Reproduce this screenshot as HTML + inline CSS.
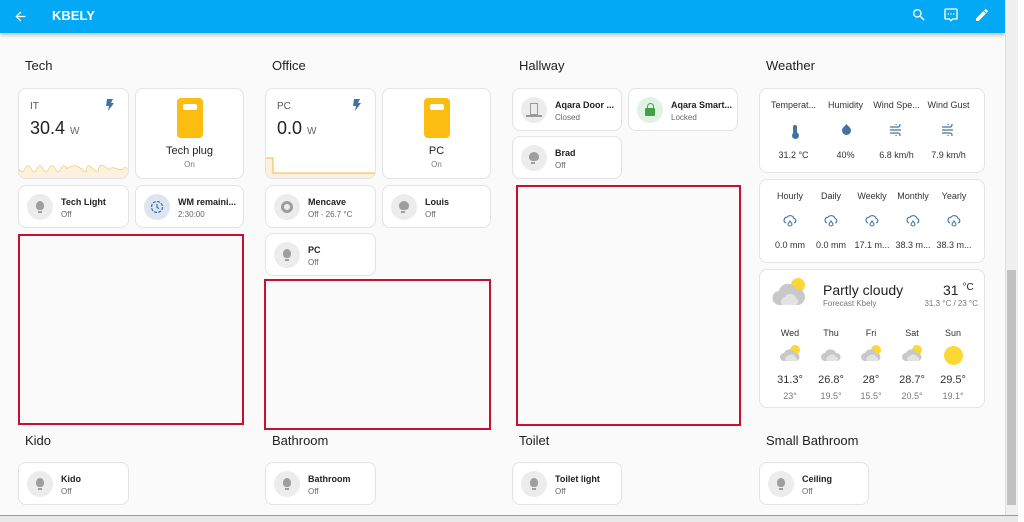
<!DOCTYPE html>
<html><head><meta charset="utf-8"><style>
*{box-sizing:border-box;margin:0;padding:0}
body{width:1024px;height:522px;overflow:hidden;background:#fff;font-family:"Liberation Sans",sans-serif;position:relative;color:#212121}
.main{position:absolute;left:0;top:0;width:1005px;height:516px;background:#fafafa}
.hdr{position:absolute;left:0;top:0;width:1005px;height:33px;background:#03a9f4;box-shadow:0 2px 4px rgba(0,0,0,.25);color:#fff}
.a{position:absolute}
.t{position:absolute;font-size:13px;color:#212121}
.c{position:absolute;background:#fff;border:1px solid #e3e3e3;border-radius:8px}
.red{position:absolute;border:2px solid #c8102e}
.tile .ic{position:absolute;left:8px;top:8px;width:26px;height:26px;border-radius:50%;background:#ececec}
.tile .n{position:absolute;left:42px;top:11px;font-size:9px;font-weight:bold;color:#222;white-space:nowrap}
.tile .s{position:absolute;left:42px;top:24px;font-size:8px;color:#666;white-space:nowrap}
.bulb{position:absolute;left:9px;top:7px;width:8px;height:9px;border-radius:50% 50% 40% 40%;background:#9e9e9e}
.bulb:after{content:"";position:absolute;left:2px;top:10px;width:4px;height:2px;background:#9e9e9e}
.wc{font-size:9px;color:#333;text-align:center;position:absolute}
</style></head><body>
<div class="main"></div>
<div class="hdr">
<svg class="a" style="left:13px;top:9px" width="15" height="15" viewBox="0 0 24 24"><path d="M20 11H7.8l5.6-5.6L12 4l-8 8 8 8 1.4-1.4L7.8 13H20z" fill="#fff"/></svg>
<div class="a" style="left:52px;top:8px;font-size:13px;font-weight:bold;color:#fff">KBELY</div>
<svg class="a" style="left:911px;top:7px" width="16" height="16" viewBox="0 0 24 24"><path d="M15.5 14h-.8l-.3-.3A6.5 6.5 0 1 0 9.5 16a6.5 6.5 0 0 0 4.2-1.6l.3.3v.8l5 5 1.5-1.5zm-6 0a4.5 4.5 0 1 1 0-9 4.5 4.5 0 0 1 0 9z" fill="#fff"/></svg>
<svg class="a" style="left:943px;top:7px" width="16" height="16" viewBox="0 0 24 24"><path d="M20 2H4a2 2 0 0 0-2 2v13a2 2 0 0 0 2 2h5l3 3 3-3h5a2 2 0 0 0 2-2V4a2 2 0 0 0-2-2zm0 15h-5.8L12 19.2 9.8 17H4V4h16zM7 9.5h2v2H7zm4 0h2v2h-2zm4 0h2v2h-2z" fill="#fff"/></svg>
<svg class="a" style="left:974px;top:7px" width="16" height="16" viewBox="0 0 24 24"><path d="M3 17.25V21h3.75L17.8 9.94l-3.75-3.75zM20.7 7.04a1 1 0 0 0 0-1.41l-2.34-2.34a1 1 0 0 0-1.41 0l-1.83 1.83 3.75 3.75z" fill="#fff"/></svg>
</div>
<!-- scrollbar -->
<div class="a" style="left:1005px;top:0;width:13px;height:516px;background:#f0f0f0;border-left:1px solid #ddd"></div>
<div class="a" style="left:1007px;top:270px;width:9px;height:235px;background:#c1c1c1"></div>
<div class="a" style="left:0;top:515px;width:1018px;height:7px;background:#e8e8e8;border-top:1px solid #999"></div>

<div class="t" style="left:25px;top:58px">Tech</div>
<div class="t" style="left:272px;top:58px">Office</div>
<div class="t" style="left:519px;top:58px">Hallway</div>
<div class="t" style="left:766px;top:58px">Weather</div>
<div class="t" style="left:25px;top:433px">Kido</div>
<div class="t" style="left:272px;top:433px">Bathroom</div>
<div class="t" style="left:519px;top:433px">Toilet</div>
<div class="t" style="left:766px;top:433px">Small Bathroom</div>

<!-- Tech -->
<div class="c" style="left:18px;top:88px;width:111px;height:91px;overflow:hidden">
<div class="a" style="left:11px;top:12px;font-size:10px;color:#555">IT</div>
<div class="a" style="left:11px;top:29px;font-size:18px;color:#222">30.4 <span style="font-size:10px;color:#666">W</span></div>
<svg class="a" style="left:86px;top:10px" width="10" height="12" viewBox="0 0 10 12"><path d="M2 0h6L6 4h3L3 12l1-5H1z" fill="#44739e"/></svg>
<svg class="a" style="left:0;top:74px" width="111" height="17"><path d="M0 6 Q3 12 6 6 T12 6 T18 6 T24 6 T30 6 T36 6 T42 6 T48 6 Q56 0 62 6 T68 6 T74 6 T80 6 T86 4 T92 6 T98 6 T104 6 T111 6" fill="none" stroke="#f2b64b" stroke-width="1"/><path d="M0 6 Q3 12 6 6 T12 6 T18 6 T24 6 T30 6 T36 6 T42 6 T48 6 Q56 0 62 6 T68 6 T74 6 T80 6 T86 4 T92 6 T98 6 T104 6 T111 6 V17 H0z" fill="#fdf1de"/></svg>
</div>
<div class="c" style="left:135px;top:88px;width:109px;height:91px">
<div class="a" style="left:41px;top:9px;width:26px;height:40px;background:#fdbd10;border-radius:4px"><div class="a" style="left:6px;top:6px;width:14px;height:6px;background:#fff;border-radius:2px"></div></div>
<div class="a" style="left:0;width:107px;top:56px;text-align:center;font-size:11px">Tech plug</div>
<div class="a" style="left:0;width:107px;top:71px;text-align:center;font-size:8px;color:#777">On</div>
</div>
<div class="c tile" style="left:18px;top:185px;width:111px;height:43px"><div class="ic"><div class="bulb"></div></div><div class="n">Tech Light</div><div class="s">Off</div></div>
<div class="c tile" style="left:135px;top:185px;width:109px;height:43px"><div class="ic" style="background:#dde6f0"><svg class="a" style="left:6px;top:6px" width="14" height="14" viewBox="0 0 14 14"><circle cx="7" cy="7" r="5.5" fill="none" stroke="#44739e" stroke-width="1.3" stroke-dasharray="3 1.3"/><path d="M7 4v3.3l2 1.3" fill="none" stroke="#44739e" stroke-width="1.2"/></svg></div><div class="n">WM remaini...</div><div class="s">2:30:00</div></div>
<div class="red" style="left:18px;top:234px;width:226px;height:191px"></div>

<!-- Office -->
<div class="c" style="left:265px;top:88px;width:111px;height:91px;overflow:hidden">
<div class="a" style="left:11px;top:12px;font-size:10px;color:#555">PC</div>
<div class="a" style="left:11px;top:29px;font-size:18px;color:#222">0.0 <span style="font-size:10px;color:#666">W</span></div>
<svg class="a" style="left:86px;top:10px" width="10" height="12" viewBox="0 0 10 12"><path d="M2 0h6L6 4h3L3 12l1-5H1z" fill="#44739e"/></svg>
<svg class="a" style="left:0;top:68px" width="111" height="23"><path d="M0 1H7V16H111V23H0z" fill="#fdf1de"/><path d="M0 1H7V16H111" fill="none" stroke="#f2b64b" stroke-width="1"/></svg>
</div>
<div class="c" style="left:382px;top:88px;width:109px;height:91px">
<div class="a" style="left:41px;top:9px;width:26px;height:40px;background:#fdbd10;border-radius:4px"><div class="a" style="left:6px;top:6px;width:14px;height:6px;background:#fff;border-radius:2px"></div></div>
<div class="a" style="left:0;width:107px;top:56px;text-align:center;font-size:11px">PC</div>
<div class="a" style="left:0;width:107px;top:71px;text-align:center;font-size:8px;color:#777">On</div>
</div>
<div class="c tile" style="left:265px;top:185px;width:111px;height:43px"><div class="ic"><div class="a" style="left:7px;top:7px;width:12px;height:12px;border-radius:50%;border:3px solid #9e9e9e"></div></div><div class="n">Mencave</div><div class="s">Off · 26.7 °C</div></div>
<div class="c tile" style="left:382px;top:185px;width:109px;height:43px"><div class="ic"><div class="bulb" style="left:8px;width:10px"></div></div><div class="n">Louis</div><div class="s">Off</div></div>
<div class="c tile" style="left:265px;top:233px;width:111px;height:43px"><div class="ic"><div class="bulb"></div></div><div class="n">PC</div><div class="s">Off</div></div>
<div class="red" style="left:264px;top:279px;width:227px;height:151px"></div>

<!-- Hallway -->
<div class="c tile" style="left:512px;top:88px;width:110px;height:43px"><div class="ic"><div class="a" style="left:9px;top:6px;width:8px;height:12px;border:1.5px solid #999"></div><div class="a" style="left:5px;top:18px;width:16px;height:1.5px;background:#999"></div></div><div class="n">Aqara Door ...</div><div class="s">Closed</div></div>
<div class="c tile" style="left:628px;top:88px;width:110px;height:43px"><div class="ic" style="background:#e0f2e3"><div class="a" style="left:8px;top:11px;width:10px;height:8px;background:#43a047;border-radius:1px"></div><div class="a" style="left:9.5px;top:6px;width:7px;height:7px;border:1.5px solid #43a047;border-bottom:none;border-radius:4px 4px 0 0"></div></div><div class="n">Aqara Smart...</div><div class="s">Locked</div></div>
<div class="c tile" style="left:512px;top:136px;width:110px;height:43px"><div class="ic"><div class="bulb" style="left:8px;width:10px"></div></div><div class="n">Brad</div><div class="s">Off</div></div>
<div class="red" style="left:516px;top:185px;width:225px;height:241px"></div>

<!-- Weather -->
<div class="c" style="left:759px;top:88px;width:226px;height:85px">
<div class="wc" style="left:6px;width:55px;top:11px">Temperat...</div>
<div class="wc" style="left:58px;width:55px;top:11px">Humidity</div>
<div class="wc" style="left:109px;width:55px;top:11px">Wind Spe...</div>
<div class="wc" style="left:161px;width:55px;top:11px">Wind Gust</div>
<div class="a" style="left:33px;top:36px;width:4px;height:10px;background:#44739e;border-radius:2px"></div><div class="a" style="left:31.5px;top:43px;width:7px;height:7px;background:#44739e;border-radius:50%"></div>
<div class="a" style="left:82px;top:37px;width:9px;height:9px;background:#44739e;border-radius:0 50% 50% 50%;transform:rotate(45deg)"></div>
<svg class="a" style="left:129px;top:35px" width="14" height="12"><path d="M1 3h8a2 2 0 1 0-2-2M1 6h11M1 9h8a2 2 0 1 1-2 2" fill="none" stroke="#44739e" stroke-width="1.2"/></svg>
<svg class="a" style="left:181px;top:35px" width="14" height="12"><path d="M1 3h8a2 2 0 1 0-2-2M1 6h11M1 9h8a2 2 0 1 1-2 2" fill="none" stroke="#44739e" stroke-width="1.2"/></svg>
<div class="wc" style="left:6px;width:55px;top:61px">31.2 °C</div>
<div class="wc" style="left:58px;width:55px;top:61px">40%</div>
<div class="wc" style="left:109px;width:55px;top:61px">6.8 km/h</div>
<div class="wc" style="left:161px;width:55px;top:61px">7.9 km/h</div>
</div>
<div class="c" style="left:759px;top:179px;width:226px;height:84px">
<div class="wc" style="left:8px;width:44px;top:11px">Hourly</div>
<div class="wc" style="left:49px;width:44px;top:11px">Daily</div>
<div class="wc" style="left:90px;width:44px;top:11px">Weekly</div>
<div class="wc" style="left:131px;width:44px;top:11px">Monthly</div>
<div class="wc" style="left:172px;width:44px;top:11px">Yearly</div>
<svg class="a" style="left:23px;top:34px" width="14" height="14"><path d="M3 9a3 3 0 0 1 1-5.8 4 4 0 0 1 7 1.3 2.3 2.3 0 0 1 0 4.5M7 7l-2 3a2 2 0 0 0 4 0z" fill="none" stroke="#44739e" stroke-width="1.1"/></svg>
<svg class="a" style="left:64px;top:34px" width="14" height="14"><path d="M3 9a3 3 0 0 1 1-5.8 4 4 0 0 1 7 1.3 2.3 2.3 0 0 1 0 4.5M7 7l-2 3a2 2 0 0 0 4 0z" fill="none" stroke="#44739e" stroke-width="1.1"/></svg>
<svg class="a" style="left:105px;top:34px" width="14" height="14"><path d="M3 9a3 3 0 0 1 1-5.8 4 4 0 0 1 7 1.3 2.3 2.3 0 0 1 0 4.5M7 7l-2 3a2 2 0 0 0 4 0z" fill="none" stroke="#44739e" stroke-width="1.1"/></svg>
<svg class="a" style="left:146px;top:34px" width="14" height="14"><path d="M3 9a3 3 0 0 1 1-5.8 4 4 0 0 1 7 1.3 2.3 2.3 0 0 1 0 4.5M7 7l-2 3a2 2 0 0 0 4 0z" fill="none" stroke="#44739e" stroke-width="1.1"/></svg>
<svg class="a" style="left:187px;top:34px" width="14" height="14"><path d="M3 9a3 3 0 0 1 1-5.8 4 4 0 0 1 7 1.3 2.3 2.3 0 0 1 0 4.5M7 7l-2 3a2 2 0 0 0 4 0z" fill="none" stroke="#44739e" stroke-width="1.1"/></svg>
<div class="wc" style="left:8px;width:44px;top:60px">0.0 mm</div>
<div class="wc" style="left:49px;width:44px;top:60px">0.0 mm</div>
<div class="wc" style="left:90px;width:44px;top:60px">17.1 m...</div>
<div class="wc" style="left:131px;width:44px;top:60px">38.3 m...</div>
<div class="wc" style="left:172px;width:44px;top:60px">38.3 m...</div>
</div>
<div class="c" style="left:759px;top:269px;width:226px;height:139px">
<svg class="a" style="left:12px;top:5px" width="38" height="32"><circle cx="26" cy="10" r="7" fill="#fdd835"/><path d="M8 30a7 7 0 0 1-1-14 9 9 0 0 1 17-2 7 7 0 0 1 2 16z" fill="#c8c8c8"/><path d="M10 30a5 5 0 0 1 3-8 6 6 0 0 1 11 1 4 4 0 0 1 0 7z" fill="#e3e3e3"/></svg>
<div class="a" style="left:63px;top:12px;font-size:14px;color:#222">Partly cloudy</div>
<div class="a" style="left:63px;top:29px;font-size:8px;color:#777">Forecast Kbely</div>
<div class="a" style="left:183px;top:12px;font-size:14px;color:#222">31 <span style="font-size:10px;vertical-align:top">°C</span></div>
<div class="a" style="right:6px;top:29px;font-size:8px;color:#777">31.3 °C / 23 °C</div>
<div class="wc" style="left:11px;width:38px;top:58px">Wed</div>
<div class="wc" style="left:52px;width:38px;top:58px">Thu</div>
<div class="wc" style="left:92px;width:38px;top:58px">Fri</div>
<div class="wc" style="left:133px;width:38px;top:58px">Sat</div>
<div class="wc" style="left:174px;width:38px;top:58px">Sun</div>
<svg class="a" style="left:19px;top:73px" width="24" height="20"><circle cx="16" cy="7" r="5" fill="#fdd835"/><path d="M5 18a4 4 0 0 1 0-8 6 6 0 0 1 11 0 4 4 0 0 1 1 8z" fill="#c8c8c8"/><path d="M7 18a3 3 0 0 1 2-5 4 4 0 0 1 7 1 2 2 0 0 1 0 4z" fill="#e3e3e3"/></svg>
<svg class="a" style="left:60px;top:73px" width="24" height="20"><path d="M5 18a4 4 0 0 1 0-8 6 6 0 0 1 11 0 4 4 0 0 1 1 8z" fill="#c8c8c8"/><path d="M7 18a3 3 0 0 1 2-5 4 4 0 0 1 7 1 2 2 0 0 1 0 4z" fill="#e3e3e3"/></svg>
<svg class="a" style="left:100px;top:73px" width="24" height="20"><circle cx="16" cy="7" r="5" fill="#fdd835"/><path d="M5 18a4 4 0 0 1 0-8 6 6 0 0 1 11 0 4 4 0 0 1 1 8z" fill="#c8c8c8"/><path d="M7 18a3 3 0 0 1 2-5 4 4 0 0 1 7 1 2 2 0 0 1 0 4z" fill="#e3e3e3"/></svg>
<svg class="a" style="left:141px;top:73px" width="24" height="20"><circle cx="16" cy="7" r="5" fill="#fdd835"/><path d="M5 18a4 4 0 0 1 0-8 6 6 0 0 1 11 0 4 4 0 0 1 1 8z" fill="#c8c8c8"/><path d="M7 18a3 3 0 0 1 2-5 4 4 0 0 1 7 1 2 2 0 0 1 0 4z" fill="#e3e3e3"/></svg>
<div class="a" style="left:184px;top:76px;width:19px;height:19px;border-radius:50%;background:#fdd835"></div>
<div class="wc" style="left:11px;width:38px;top:104px;font-size:11px">31.3°</div>
<div class="wc" style="left:52px;width:38px;top:104px;font-size:11px">26.8°</div>
<div class="wc" style="left:92px;width:38px;top:104px;font-size:11px">28°</div>
<div class="wc" style="left:133px;width:38px;top:104px;font-size:11px">28.7°</div>
<div class="wc" style="left:174px;width:38px;top:104px;font-size:11px">29.5°</div>
<div class="wc" style="left:11px;width:38px;top:121px;color:#777">23°</div>
<div class="wc" style="left:52px;width:38px;top:121px;color:#777">19.5°</div>
<div class="wc" style="left:92px;width:38px;top:121px;color:#777">15.5°</div>
<div class="wc" style="left:133px;width:38px;top:121px;color:#777">20.5°</div>
<div class="wc" style="left:174px;width:38px;top:121px;color:#777">19.1°</div>
</div>

<!-- bottom tiles -->
<div class="c tile" style="left:18px;top:462px;width:111px;height:43px"><div class="ic"><div class="bulb"></div></div><div class="n">Kido</div><div class="s">Off</div></div>
<div class="c tile" style="left:265px;top:462px;width:111px;height:43px"><div class="ic"><div class="bulb"></div></div><div class="n">Bathroom</div><div class="s">Off</div></div>
<div class="c tile" style="left:512px;top:462px;width:110px;height:43px"><div class="ic"><div class="bulb"></div></div><div class="n">Toilet light</div><div class="s">Off</div></div>
<div class="c tile" style="left:759px;top:462px;width:110px;height:43px"><div class="ic"><div class="bulb"></div></div><div class="n">Ceiling</div><div class="s">Off</div></div>
</body></html>
